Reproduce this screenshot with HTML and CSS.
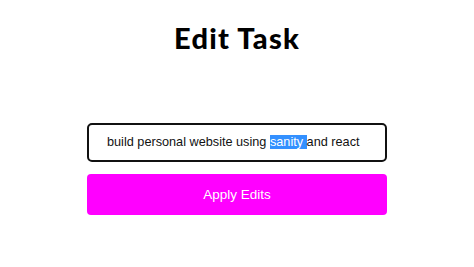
FILE: index.html
```html
<!DOCTYPE html>
<html lang="en">
<head>
    <meta charset="UTF-8">
    <meta name="viewport" content="width=device-width, initial-scale=1.0">
    <title>Edit Task</title>
    <link rel="stylesheet" href="styles.css">
</head>
<body>

    <div class="container">
        <h1>Edit Task</h1>

        <!-- Edit form -->
        <form class="edit-form">
            <div class="task-input">build personal website using <span class="selected">sanity </span>and react</div>
            <button type="button" class="apply-button">Apply Edits</button>
        </form>
    </div>

</body>
</html>
```

FILE: styles.css
```css
body { margin: 0; font-family: "Liberation Sans", Arial, sans-serif; background-color: #fff; color: #000; }
.container { width: 300px; margin: 0 auto; }
h1 { margin: 0; padding-top: 20px; text-align: center; font-family: Lato, sans-serif; font-weight: 900; font-size: 29px; line-height: 36px; letter-spacing: 1.2px; }
.edit-form { display: flex; flex-direction: column; gap: 12px; margin-top: 67px; }
.task-input { height: 35px; border: 2px solid #111; border-radius: 5px; padding: 0 18px; font-size: 12.7px; line-height: 35px; white-space: nowrap; color: #111; }
.selected { background-color: #3390ff; color: #fff; }
.apply-button { height: 41px; border: none; border-radius: 4px; background-color: #ff00ff; color: #fff; font-family: "Liberation Sans", Arial, sans-serif; font-size: 13.5px; }
```
